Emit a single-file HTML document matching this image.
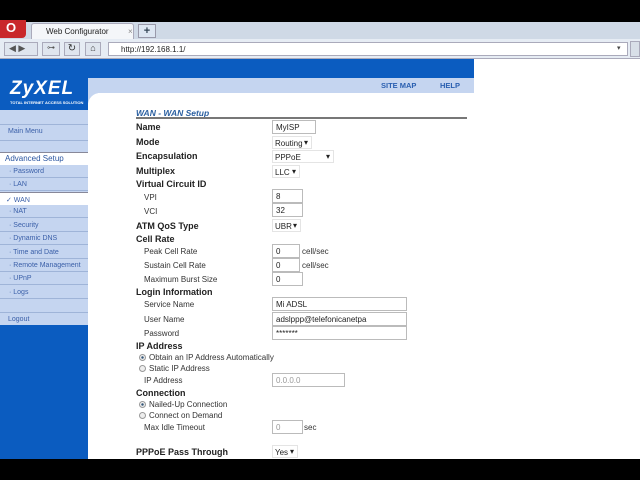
<!DOCTYPE html>
<html><head><meta charset="utf-8"><style>
*{margin:0;padding:0;box-sizing:border-box}
body{width:640px;height:480px;overflow:hidden;background:#fff;font-family:"Liberation Sans",sans-serif;position:relative}
div,span{position:absolute;white-space:nowrap}
.l{font-size:9px;color:#222;font-weight:bold;left:136px}
.s{font-size:8px;color:#333;left:144px}
.in{left:272px;height:14px;border:1px solid #bbb;background:#fff;font-size:8px;color:#222;padding:2px 3px;line-height:9px}
.sel{left:272px;height:13px;font-size:8px;color:#222;padding:2px 2px;line-height:9px;background:#fff;border:1px solid #e4e4e4}
.sel:after{content:"▾";position:absolute;right:3px;top:1px;font-size:8px}
.nav{left:0;width:88px;height:13px;background:#c5d5f0;border-bottom:1px solid #9fb4d8;font-size:7px;color:#3a5fa8;padding:3px 0 0 9px}
.r{width:7px;height:7px;border-radius:50%;border:1px solid #999;left:139px;background:#eee}
.r.on{background:radial-gradient(#357 30%,#eee 40%)}
</style></head><body>
<div style="left:0;top:0;width:640px;height:22px;background:#000"></div>
<div style="left:0;top:22px;width:640px;height:17px;background:#cfd9e6"></div>
<div style="left:0;top:20px;width:26px;height:18px;background:#c9282b;border-radius:0 0 4px 0;color:#fff;font-weight:bold;font-size:13px;padding-left:6px">O</div>
<div style="left:31px;top:23px;width:103px;height:16px;background:#f4f6f9;border:1px solid #aab;border-bottom:none;border-radius:3px 3px 0 0;font-size:8px;color:#222;padding:3px 0 0 14px">Web Configurator<span style="left:96px;top:3px;color:#888">×</span></div>
<div style="left:138px;top:24px;width:18px;height:14px;background:#dde6f2;border:1px solid #99a;font-size:11px;color:#345;text-align:center;line-height:12px;font-weight:bold">+</div>
<div style="left:0;top:39px;width:640px;height:20px;background:#e6ecf4;border-bottom:1px solid #aab"></div>
<div style="left:4px;top:42px;width:34px;height:14px;background:#dfe5ee;border:1px solid #aab;font-size:9px;color:#555;padding-left:4px">◀ ▶</div>
<div style="left:42px;top:42px;width:18px;height:14px;background:#dfe5ee;border:1px solid #aab;font-size:8px;color:#555;text-align:center">⊶</div>
<div style="left:64px;top:42px;width:16px;height:14px;background:#dfe5ee;border:1px solid #aab;font-size:10px;color:#333;text-align:center;line-height:12px">↻</div>
<div style="left:85px;top:42px;width:16px;height:14px;background:#dfe5ee;border:1px solid #aab;font-size:9px;color:#333;text-align:center">⌂</div>
<div style="left:108px;top:42px;width:520px;height:14px;background:#fff;border:1px solid #aab;font-size:8px;color:#222;padding:2px 0 0 12px">http://192.168.1.1/<span style="left:508px;top:1px;font-size:7px;color:#444">▾</span></div>
<div style="left:630px;top:41px;width:10px;height:16px;background:#d8dfe8;border:1px solid #aab"></div>
<div style="left:0;top:59px;width:474px;height:19px;background:#0b5cc0"></div>
<div style="left:0;top:78px;width:88px;height:32px;background:#0b5cc0"></div>
<div style="left:10px;top:78px;font-size:19px;font-weight:bold;font-style:italic;color:#fff;letter-spacing:1px">ZyXEL</div>
<div style="left:10px;top:100px;font-size:4px;color:#fff;font-weight:bold">TOTAL INTERNET ACCESS SOLUTION</div>
<div style="left:88px;top:78px;width:386px;height:15px;background:#c5d5f0"></div>
<div style="left:381px;top:81px;font-size:7.5px;font-weight:bold;color:#2a5fb0">SITE MAP</div>
<div style="left:440px;top:81px;font-size:7.5px;font-weight:bold;color:#2a5fb0">HELP</div>
<div style="left:88px;top:93px;width:10px;height:10px;background:#c5d5f0"></div>
<div style="left:88px;top:93px;width:20px;height:20px;background:#fff;border-radius:12px 0 0 0"></div>
<div style="left:0;top:110px;width:88px;height:350px;background:#c5d5f0"></div>
<div style="left:0;top:124px;width:88px;height:1px;background:#9fb4d8"></div>
<div style="left:8px;top:128px;font-size:7px;color:#3a5fa8">Main Menu</div>
<div style="left:0;top:140px;width:88px;height:1px;background:#9fb4d8"></div>
<div style="left:0;top:152px;width:88px;height:13px;background:#fff;border-top:1px solid #889"></div>
<div style="left:5px;top:154px;font-size:8px;color:#2a55a0">Advanced Setup</div>
<div class="nav" style="top:165px">· Password</div>
<div class="nav" style="top:178px">· LAN</div>
<div style="left:0;top:192px;width:88px;height:13px;background:#fff;border-top:1px solid #889;font-size:7px;color:#3a5fa8;padding:3px 0 0 6px">✓ WAN</div>
<div class="nav" style="top:205px">· NAT</div>
<div class="nav" style="top:219px">· Security</div>
<div class="nav" style="top:232px">· Dynamic DNS</div>
<div class="nav" style="top:246px">· Time and Date</div>
<div class="nav" style="top:259px">· Remote Management</div>
<div class="nav" style="top:272px">· UPnP</div>
<div class="nav" style="top:286px">· Logs</div>
<div style="left:0;top:312px;width:88px;height:1px;background:#9fb4d8"></div>
<div style="left:8px;top:316px;font-size:7px;color:#3a5fa8">Logout</div>
<div style="left:0;top:325px;width:88px;height:135px;background:#0b5cc0"></div>
<div style="left:136px;top:108px;font-size:8.5px;font-weight:bold;font-style:italic;color:#2a5fa0">WAN - WAN Setup</div>
<div style="left:136px;top:117px;width:331px;height:2px;background:#777"></div>
<div class="l" style="top:122px">Name</div><div class="in" style="top:120px;width:44px">MyISP</div>
<div class="l" style="top:137px">Mode</div><div class="sel" style="top:136px;width:40px">Routing</div>
<div class="l" style="top:151px">Encapsulation</div><div class="sel" style="top:150px;width:62px">PPPoE</div>
<div class="l" style="top:166px">Multiplex</div><div class="sel" style="top:165px;width:28px">LLC</div>
<div class="l" style="top:179px">Virtual Circuit ID</div>
<div class="s" style="top:193px">VPI</div><div class="in" style="top:189px;width:31px">8</div>
<div class="s" style="top:207px">VCI</div><div class="in" style="top:203px;width:31px">32</div>
<div class="l" style="top:221px">ATM QoS Type</div><div class="sel" style="top:219px;width:29px">UBR</div>
<div class="l" style="top:234px">Cell Rate</div>
<div class="s" style="top:247px">Peak Cell Rate</div><div class="in" style="top:244px;width:28px">0</div><div class="s" style="left:302px;top:247px">cell/sec</div>
<div class="s" style="top:261px">Sustain Cell Rate</div><div class="in" style="top:258px;width:28px">0</div><div class="s" style="left:302px;top:261px">cell/sec</div>
<div class="s" style="top:275px">Maximum Burst Size</div><div class="in" style="top:272px;width:31px">0</div>
<div class="l" style="top:287px">Login Information</div>
<div class="s" style="top:300px">Service Name</div><div class="in" style="top:297px;width:135px">Mi ADSL</div>
<div class="s" style="top:315px">User Name</div><div class="in" style="top:312px;width:135px">adslppp@telefonicanetpa</div>
<div class="s" style="top:329px">Password</div><div class="in" style="top:326px;width:135px">*******</div>
<div class="l" style="top:341px">IP Address</div>
<div class="r on" style="top:354px"></div><div class="s" style="left:149px;top:353px">Obtain an IP Address Automatically</div>
<div class="r" style="top:365px"></div><div class="s" style="left:149px;top:364px">Static IP Address</div>
<div class="s" style="top:376px">IP Address</div><div class="in" style="top:373px;width:73px;color:#999">0.0.0.0</div>
<div class="l" style="top:388px">Connection</div>
<div class="r on" style="top:401px"></div><div class="s" style="left:149px;top:400px">Nailed-Up Connection</div>
<div class="r" style="top:412px"></div><div class="s" style="left:149px;top:411px">Connect on Demand</div>
<div class="s" style="top:423px">Max Idle Timeout</div><div class="in" style="top:420px;width:31px;color:#999">0</div><div class="s" style="left:304px;top:423px">sec</div>
<div class="l" style="top:447px">PPPoE Pass Through</div><div class="sel" style="top:445px;width:26px">Yes</div>
<div style="left:0;top:459px;width:640px;height:21px;background:#000"></div>
</body></html>
